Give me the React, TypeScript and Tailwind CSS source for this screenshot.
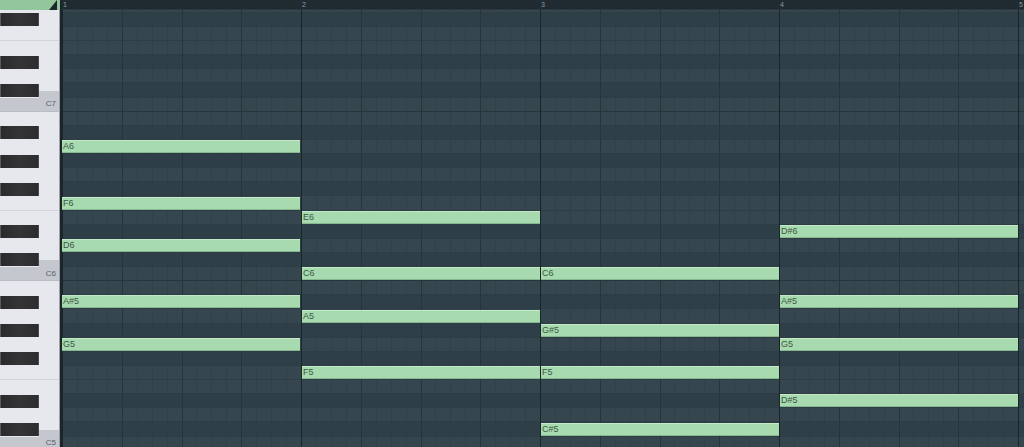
import React from "react";

// piano roll: C5 (p=0) .. G7 (p=31), rows are a little over 14px tall
const NAMES = ["C", "C#", "D", "D#", "E", "F", "F#", "G", "G#", "A", "A#", "B"];
const BLACK = new Set([1, 3, 6, 8, 10]);
const ROW = 14.13;
const BAR = 239;

const pitches = Array.from({ length: 32 }, (_, i) => 31 - i);
const noteName = (p: number) => `${NAMES[p % 12]}${5 + Math.floor(p / 12)}`;

const NOTES: { bar: number; p: number }[] = [
  { bar: 0, p: 21 },
  { bar: 0, p: 17 },
  { bar: 0, p: 14 },
  { bar: 0, p: 10 },
  { bar: 0, p: 7 },
  { bar: 1, p: 16 },
  { bar: 1, p: 12 },
  { bar: 1, p: 9 },
  { bar: 1, p: 5 },
  { bar: 2, p: 12 },
  { bar: 2, p: 8 },
  { bar: 2, p: 5 },
  { bar: 2, p: 1 },
  { bar: 3, p: 15 },
  { bar: 3, p: 10 },
  { bar: 3, p: 7 },
  { bar: 3, p: 3 },
];

function KeyRow({ p }: { p: number }) {
  const n = p % 12;
  if (BLACK.has(n)) {
    return (
      <div className="flex h-[14.13px] shrink-0 bg-[#e6e8ee]">
        <div className="mt-[0.5px] h-[13px] w-[39px] shrink-0 border-l border-r border-l-[#5a5a5e] border-r-[#4a4a4d] bg-gradient-to-r from-[#2a2a2c] via-[#353537] to-[#2c2c2e]" />
        <div className="flex flex-1 flex-col">
          <div className="flex-1" />
          <div className={n === 1 ? "flex-1 bg-[#c4c7cd]" : "flex-1"} />
        </div>
      </div>
    );
  }
  const isC = n === 0;
  return (
    <div
      className={
        isC
          ? "flex h-[14.13px] shrink-0 items-center justify-end border-b border-[#b9bcc3] bg-[#c4c7cd] pr-[3px]"
          : n === 5
            ? "h-[14.13px] shrink-0 border-b border-[#d3d5db] bg-[#e6e8ee]"
            : "h-[14.13px] shrink-0 bg-[#e6e8ee]"
      }
    >
      {isC && (
        <span className="text-[8px] leading-none text-[#5a5d64] [font-family:'Liberation_Sans',Arial,sans-serif]">
          {noteName(p)}
        </span>
      )}
    </div>
  );
}

function GridRow({ p }: { p: number }) {
  const n = p % 12;
  const bg = BLACK.has(n) ? "bg-[#2f3f48]" : "bg-[#35464f]";
  const line = n === 0 ? "border-[#28343c]" : "border-[#2e3c45]";
  return <div className={`h-[14.13px] shrink-0 border-b ${bg} ${line}`} />;
}

function BarLines() {
  return (
    <div className="pointer-events-none absolute inset-0 flex">
      {[0, 1, 2, 3, 4].map((b) => (
        <div key={b} className="flex w-[239px] shrink-0 border-l border-[#1a242b]">
          {Array.from({ length: 16 }, (_, s) => (
            <div
              key={s}
              className={
                s === 0
                  ? "flex-1"
                  : s % 4 === 0
                    ? "flex-1 border-l border-[#27343c]"
                    : "flex-1 border-l border-[#2f3d46]/80"
              }
            />
          ))}
        </div>
      ))}
    </div>
  );
}

export default function App() {
  return (
    <div className="flex h-[447px] w-[1024px] flex-col overflow-hidden bg-[#1b252c] [font-family:'Liberation_Sans',Arial,sans-serif]">
      {/* timeline header */}
      <div className="flex h-[10px] shrink-0">
        <div className="flex w-[60px] shrink-0 items-end justify-end bg-[#93c79b] pr-[3px]">
          <svg width="8" height="10" viewBox="0 0 8 10">
            <polygon points="8,0 8,10 0,10" fill="#1c272e" />
          </svg>
        </div>
        <div className="w-[2px] shrink-0 bg-[#1b252c]" />
        <div className="flex flex-1 border-b border-[#2b3840] bg-[#1f2a31]">
          {[1, 2, 3, 4, 5].map((n) => (
            <div key={n} className="w-[239px] shrink-0 pl-[1px] text-[7px] leading-[9px] text-[#8e9aa1]">
              {n}
            </div>
          ))}
        </div>
      </div>

      <div className="flex flex-1 overflow-hidden">
        {/* keyboard */}
        <div className="flex w-[62px] shrink-0">
          <div className="w-[60px] overflow-hidden border-r border-[#9ea1a8]">
            <div className="-mt-[11.3px] flex flex-col">
              {pitches.map((p) => (
                <KeyRow key={p} p={p} />
              ))}
            </div>
          </div>
          <div className="w-[2px] bg-[#1b252c]" />
        </div>

        {/* note grid */}
        <div className="relative flex-1 overflow-hidden">
          <div className="relative -mt-[11.3px] flex flex-col">
            {pitches.map((p) => (
              <GridRow key={p} p={p} />
            ))}
            <BarLines />
            {NOTES.map((note, i) => (
              <div
                key={i}
                className="absolute flex h-[13px] w-[238px] items-center border-t border-b border-t-[#c3e9c8] border-b-[#86b78e] bg-[#a8dab0] pl-[1px] text-[9px] leading-none text-[#3c5843]"
                style={{ top: (31 - note.p) * ROW, left: note.bar * BAR + (note.bar > 0 ? 1 : 0) }}
              >
                {noteName(note.p)}
              </div>
            ))}
          </div>
        </div>
      </div>
    </div>
  );
}
